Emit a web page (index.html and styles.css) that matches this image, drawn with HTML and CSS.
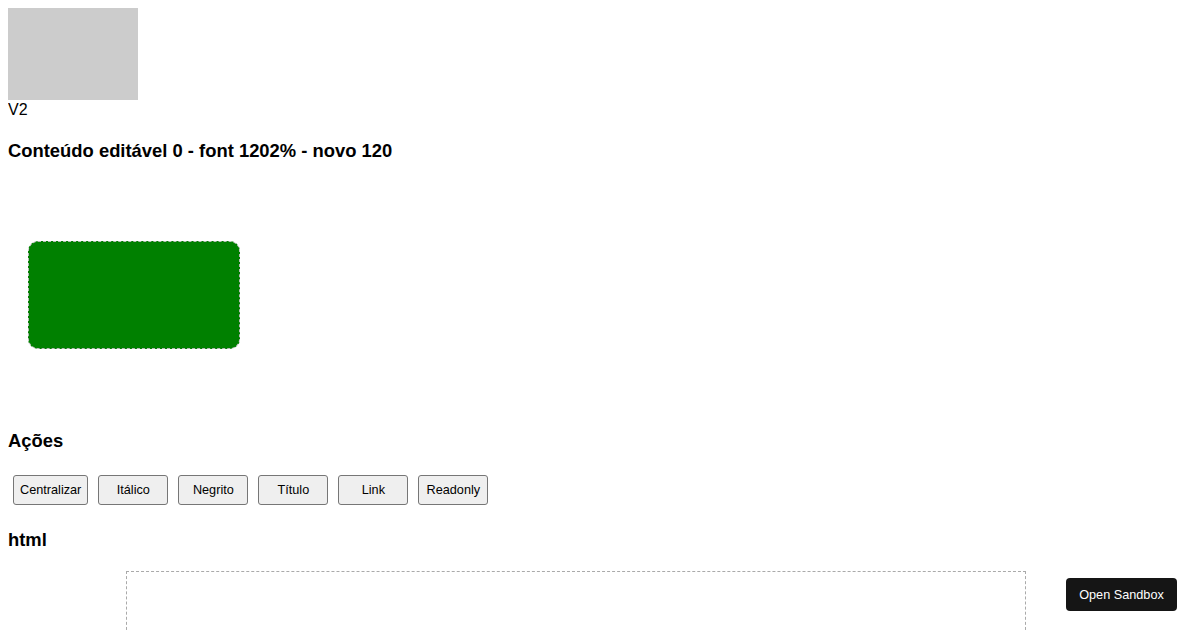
FILE: index.html
```html
<!DOCTYPE html>
<html lang="pt">
<head>
<meta charset="utf-8">
<title>Editor</title>
<link rel="stylesheet" href="styles.css">
</head>
<body>
<div class="thumb"></div>
<div class="version">V2</div>
<h3 class="heading heading-first">Conteúdo editável 0 - font 1202% - novo 120</h3>
<div class="stage">
  <div class="editable" contenteditable="true"></div>
</div>
<h3 class="heading">Ações</h3>
<div class="actions">
  <button class="btn">Centralizar</button>
  <button class="btn">Itálico</button>
  <button class="btn">Negrito</button>
  <button class="btn">Título</button>
  <button class="btn">Link</button>
  <button class="btn">Readonly</button>
</div>
<h3 class="heading">html</h3>
<div class="output"></div>
<a class="sandbox-btn" href="#">Open Sandbox</a>
</body>
</html>
```

FILE: styles.css
```css
html, body {
  margin: 0;
  padding: 0;
}
body {
  margin: 8px;
  font-family: "Liberation Sans", Arial, sans-serif;
  font-size: 16px;
  color: #000;
  background: #fff;
  overflow: hidden;
}
.thumb {
  width: 130px;
  height: 92px;
  background: #cccccc;
}
.version {
  line-height: 19px;
}
.heading {
  font-size: 18.4px;
  font-weight: bold;
  margin: 19px 0;
  line-height: 21.5px;
}
.heading-first {
  margin-top: 21px;
}
.stage {
  padding: 60px 20px 62px;
}
.editable {
  box-sizing: border-box;
  width: 212px;
  height: 108px;
  background: #008000;
  border: 1px dashed #bbbbbb;
  border-radius: 10px;
}
.actions {
  display: flex;
  flex-wrap: wrap;
}
.btn {
  box-sizing: border-box;
  min-width: 70px;
  height: 30px;
  margin: 5px;
  padding: 0 6px;
  font-family: "Liberation Sans", Arial, sans-serif;
  font-size: 12.7px;
  color: #000;
  background: #efefef;
  border: 1px solid #767676;
  border-radius: 3px;
}
.output {
  box-sizing: border-box;
  width: 900px;
  height: 120px;
  margin-top: 20px;
  margin-left: 118px;
  border: 1px dashed #aaaaaa;
}
.sandbox-btn {
  position: fixed;
  top: 578px;
  right: 23px;
  box-sizing: border-box;
  width: 111px;
  height: 33px;
  display: flex;
  align-items: center;
  justify-content: center;
  background: #151515;
  color: #ffffff;
  font-size: 12.7px;
  text-decoration: none;
  border-radius: 4px;
}
```
